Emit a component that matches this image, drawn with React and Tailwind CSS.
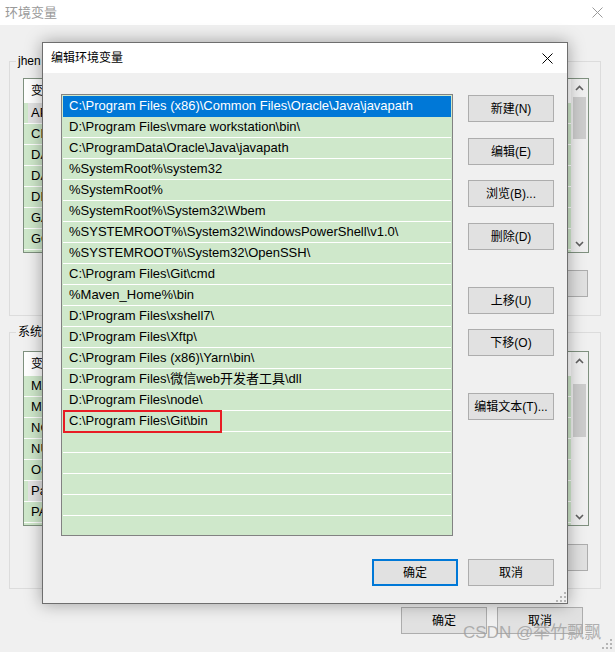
import React from 'react';

const paths = [
  'C:\\Program Files (x86)\\Common Files\\Oracle\\Java\\javapath',
  'D:\\Program Files\\vmare workstation\\bin\\',
  'C:\\ProgramData\\Oracle\\Java\\javapath',
  '%SystemRoot%\\system32',
  '%SystemRoot%',
  '%SystemRoot%\\System32\\Wbem',
  '%SYSTEMROOT%\\System32\\WindowsPowerShell\\v1.0\\',
  '%SYSTEMROOT%\\System32\\OpenSSH\\',
  'C:\\Program Files\\Git\\cmd',
  '%Maven_Home%\\bin',
  'D:\\Program Files\\xshell7\\',
  'D:\\Program Files\\Xftp\\',
  'C:\\Program Files (x86)\\Yarn\\bin\\',
  'D:\\Program Files\\微信web开发者工具\\dll',
  'D:\\Program Files\\node\\',
  'C:\\Program Files\\Git\\bin',
  '', '', '', '', '',
];

const userVars = ['APPDATA_HOME', 'CLASSPATH', 'DATAGRIP', 'DATASPELL', 'DEVECOSTUDIO', 'GATEWAY', 'GOLAND'];
const sysVars = ['MAVEN_HOME', 'MYSQL_HOME', 'NODE_PATH', 'NUMBER_OF_PROCESSORS', 'OS', 'Path', 'PATHEXT'];

const CloseX = ({ color = '#000' }) => (
  <svg width="11" height="11" viewBox="0 0 11 11">
    <path d="M0.5 0.5L10.5 10.5M10.5 0.5L0.5 10.5" stroke={color} strokeWidth="1" fill="none" />
  </svg>
);

const Grip = () => (
  <svg width="10" height="10" viewBox="0 0 10 10">
    {[[8, 0], [4, 4], [8, 4], [0, 8], [4, 8], [8, 8]].map(([x, y], i) => (
      <rect key={i} x={x} y={y} width="2" height="2" fill="#b5b5b5" />
    ))}
  </svg>
);

const Chevron = ({ up }) => (
  <svg width="9" height="6" viewBox="0 0 9 6">
    <path d={up ? 'M1 5L4.5 1.5L8 5' : 'M1 1L4.5 4.5L8 1'} stroke="#606060" strokeWidth="1.6" fill="none" />
  </svg>
);

const Btn = ({ children, primary, className = '' }) => (
  <div
    className={`w-[86px] h-[27px] flex items-center justify-center bg-[#e1e1e1] text-[12px] text-black ${
      primary ? 'border-2 border-[#0078d7]' : 'border border-[#adadad]'
    } ${className}`}
  >
    {children}
  </div>
);

// list in the window behind the dialog
const VarList = ({ items, active, thumbTop, thumbH }) => (
  <div className="w-[566px] h-[175px] border border-[#7f917f] bg-[#cfe8cb] flex">
    <div className="flex-1 flex flex-col">
      <div className="h-[24px] bg-white flex items-center pl-[7px] text-[12px] gap-[160px] shrink-0">
        <span>变量</span>
        <span>值</span>
      </div>
      {items.map((v, i) => (
        <div key={v} className="h-[21px] border-b border-white flex items-center text-[13px] shrink-0">
          <span className={`ml-[4px] pl-[3px] w-[150px] h-full flex items-center ${i === active ? 'bg-[#e3e3e3]' : ''}`}>{v}</span>
        </div>
      ))}
    </div>
    <div className="w-[17px] bg-[#f0f0f0] flex flex-col items-center">
      <div className="h-[17px] flex items-center justify-center"><Chevron up /></div>
      <div className="w-[13px] bg-[#cdcdcd]" style={{ marginTop: thumbTop, height: thumbH }} />
      <div className="flex-1" />
      <div className="h-[17px] flex items-center justify-center"><Chevron /></div>
    </div>
  </div>
);

const GroupBox = ({ label, children, className = '' }) => (
  <div className={`relative border border-[#dcdcdc] ${className}`}>
    <span className="absolute left-[6px] -top-[9px] bg-[#f0f0f0] px-[2px] text-[12px] leading-[16px] text-black">{label}</span>
    {children}
  </div>
);

export default function App() {
  return (
    <div className="relative w-[615px] h-[652px] overflow-hidden bg-[#f0f0f0] font-['Liberation_Sans','Noto_Sans_CJK_SC',sans-serif] text-black">
      {/* background window */}
      <div className="h-[25px] bg-white flex items-center justify-between pl-[5px] pr-[12px]">
        <span className="text-[13px] text-[#9a9a9a]">环境变量</span>
        <CloseX color="#9a9a9a" />
      </div>
      <div className="pl-[9px] pr-[14px] pt-[36px]">
        <GroupBox label="jhen 的用户变量(U)" className="pt-[16px] pl-[13px] pb-[18px]">
          <VarList items={userVars} active={0} thumbTop={1} thumbH={42} />
          <div className="flex justify-end gap-[10px] mt-[17px] pr-[12px]">
            <Btn>新建(N)...</Btn>
            <Btn>编辑(E)...</Btn>
            <Btn>删除(D)</Btn>
          </div>
        </GroupBox>
        <GroupBox label="系统变量(S)" className="mt-[16px] pt-[18px] pl-[13px] pb-[17px]">
          <VarList items={sysVars} active={5} thumbTop={15} thumbH={53} />
          <div className="flex justify-end gap-[10px] mt-[18px] pr-[12px]">
            <Btn>新建(W)...</Btn>
            <Btn>编辑(I)...</Btn>
            <Btn>删除(L)</Btn>
          </div>
        </GroupBox>
        <div className="flex justify-end gap-[10px] mt-[18px] pr-[18px]">
          <Btn>确定</Btn>
          <Btn>取消</Btn>
        </div>
      </div>
      <div className="absolute right-[3px] bottom-[3px]"><Grip /></div>

      {/* watermark */}
      <div className="absolute left-[463px] top-[622px] text-[17px] leading-[22px] text-[#9e9e9e]/80 font-['Liberation_Sans','Noto_Sans_CJK_SC',sans-serif]">
        CSDN @举竹飘飘
      </div>

      {/* edit dialog */}
      <div className="absolute left-[42px] top-[42px] w-[526px] h-[562px] border border-[#6e6e6e] bg-[#f0f0f0] shadow-[0_0_16px_rgba(0,0,0,0.35)] flex flex-col">
        <div className="h-[30px] bg-white flex items-center justify-between pl-[8px] pr-[14px] shrink-0">
          <span className="text-[12px]">编辑环境变量</span>
          <CloseX />
        </div>
        <div className="flex-1 relative pl-[18px] pr-[13px] pt-[21px]">
          <div className="flex">
            <div className="w-[392px] h-[442px] border border-[#828282] bg-[#cfe8cb] p-px overflow-hidden">
              {paths.map((p, i) => (
                <div
                  key={i}
                  className={`relative h-[21px] flex items-center pl-[6px] text-[13px] whitespace-nowrap border-b ${
                    i === 0 ? 'bg-[#0078d7] border-[#0078d7] text-white' : 'border-white'
                  }`}
                >
                  {p}
                  {i === 15 && (
                    <span className="absolute left-0 -top-[1px] w-[159px] h-[23px] border-2 border-[#e81c24]" />
                  )}
                </div>
              ))}
            </div>
            <div className="ml-[15px] pt-px flex flex-col">
              <Btn>新建(N)</Btn>
              <Btn className="mt-[16px]">编辑(E)</Btn>
              <Btn className="mt-[15px]">浏览(B)...</Btn>
              <Btn className="mt-[16px]">删除(D)</Btn>
              <Btn className="mt-[37px]">上移(U)</Btn>
              <Btn className="mt-[15px]">下移(O)</Btn>
              <Btn className="mt-[37px]">编辑文本(T)...</Btn>
            </div>
          </div>
          <div className="flex justify-end gap-[10px] mt-[23px]">
            <Btn primary>确定</Btn>
            <Btn>取消</Btn>
          </div>
          <div className="absolute right-[1px] bottom-[1px]"><Grip /></div>
        </div>
      </div>
    </div>
  );
}
